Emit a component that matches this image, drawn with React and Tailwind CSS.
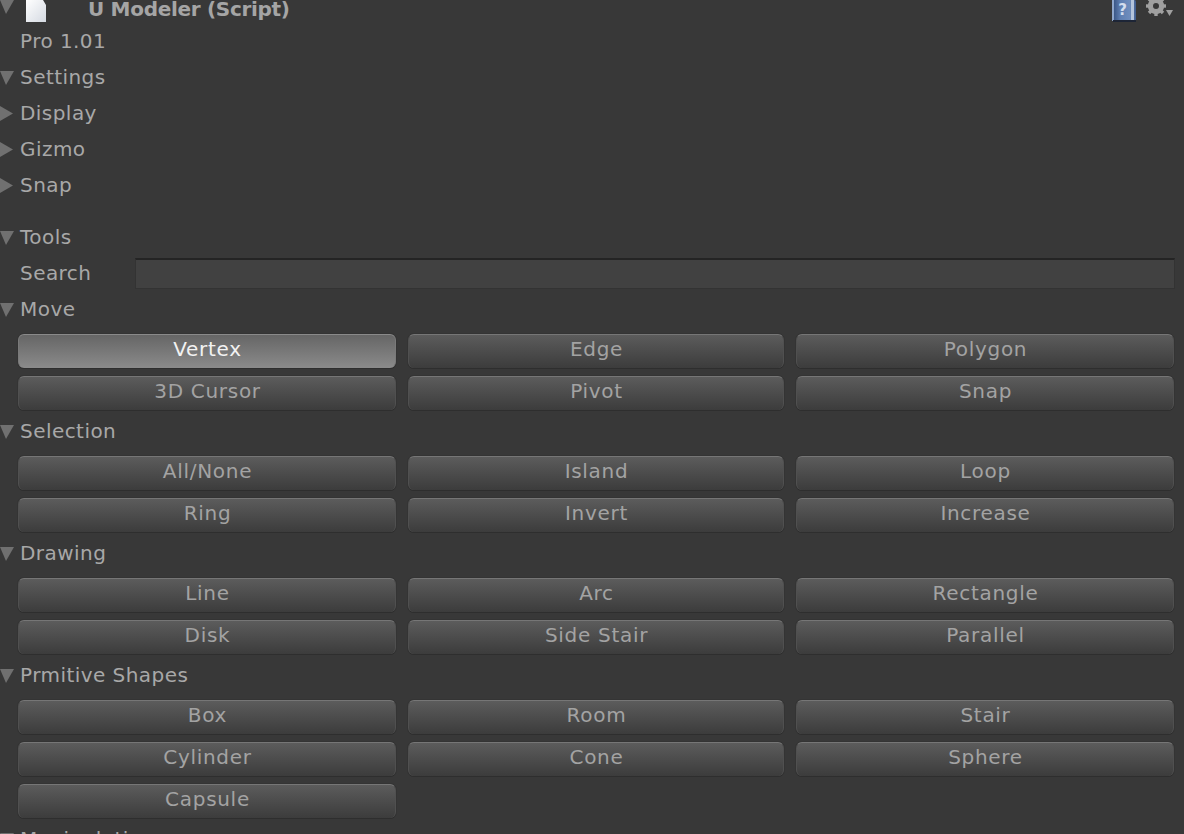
const font = { fontFamily: '"DejaVu Sans", sans-serif' };

function Tri({ open }) {
  return (
    <svg width="14" height="16" viewBox="0 0 14 16" className="absolute left-0 top-1/2 -translate-y-1/2">
      {open ? <polygon points="0,2 14,2 6,16" fill="#707070" /> : <polygon points="0,1 0,16 13,8.5" fill="#707070" />}
    </svg>
  );
}

function Row({ label, open, arrow = true }) {
  return (
    <div className="relative flex h-9 items-center pl-5 text-[20px] tracking-[0.45px] text-[#a8a8a8]">
      {arrow && <Tri open={open} />}
      {label}
    </div>
  );
}

function Btn({ label, active }) {
  return (
    <button
      className={
        "h-[34px] rounded-[6px] border-x border-t pb-[5px] pl-[1px] text-[20px] leading-[20px] tracking-[0.7px] shadow-[0_1px_0_#2e2e2e,0_0_0_1px_#343434] " +
        (active
          ? "border-x-[#7a7a7a] border-t-[#8a8a8a] bg-gradient-to-b from-[#666666] to-[#8b8b8b] text-[#f2f2f2]"
          : "border-x-[#505050] border-t-[#767676] bg-gradient-to-b from-[#5c5c5c] to-[#3c3c3c] text-[#a3a3a3]")
      }
    >
      {label}
    </button>
  );
}

function Section({ title, items }) {
  return (
    <div className="mb-[3px]">
      <Row label={title} open />
      <div className="grid grid-cols-[378px_376px_378px] gap-x-3 gap-y-2 pl-[18px] pt-[7px]">
        {items.map((it) => (
          <Btn key={it} label={it} active={it === "Vertex"} />
        ))}
      </div>
    </div>
  );
}

export default function App() {
  return (
    <div className="h-[834px] w-[1184px] overflow-hidden bg-[#383838]" style={font}>
      <div className="relative mb-[7px] flex h-4 items-center pl-[88px] pt-[2px] text-[20px] font-bold tracking-[-0.3px] text-[#a5a5a5]">
        <svg width="14" height="14" viewBox="0 0 14 14" className="absolute left-0 top-0">
          <polygon points="0,0 14,0 6,14" fill="#707070" />
        </svg>
        <svg width="21" height="22" viewBox="0 0 21 22" className="absolute left-[26px] top-0">
          <defs>
            <linearGradient id="doc" x1="0" y1="0" x2="1" y2="1">
              <stop offset="0" stopColor="#ffffff" />
              <stop offset="1" stopColor="#d5dae2" />
            </linearGradient>
          </defs>
          <polygon points="0,0 17,0 20,5 20,22 0,22" fill="url(#doc)" />
        </svg>
        <span className="leading-none">U Modeler (Script)</span>
        <svg width="26" height="23" viewBox="0 0 26 23" className="absolute left-[1111px] top-0">
          <defs>
            <linearGradient id="book" x1="0" y1="0" x2="1" y2="0">
              <stop offset="0" stopColor="#2f4a78" />
              <stop offset="0.35" stopColor="#5f7fb2" />
              <stop offset="0.75" stopColor="#6f8dbd" />
              <stop offset="1" stopColor="#3f5c8e" />
            </linearGradient>
          </defs>
          <rect x="1" y="0" width="24" height="21" rx="1.5" fill="url(#book)" />
          <rect x="1" y="0" width="2" height="21" fill="#8ea6cb" />
          <rect x="20" y="0" width="3" height="21" fill="#b4c4dc" />
          <rect x="2" y="20" width="23" height="2" fill="#1d2536" />
          <text x="11.5" y="15" fontSize="15" textAnchor="middle" fill="#d4deee" style={font}>?</text>
        </svg>
        <svg width="28" height="20" viewBox="0 0 28 20" className="absolute left-[1146px] top-0">
          <circle cx="10" cy="6" r="6" fill="none" stroke="#a0a0a0" strokeWidth="4.4" />
          <g stroke="#a0a0a0" strokeWidth="3.4">
            <line x1="10" y1="-3" x2="10" y2="16" />
            <line x1="0" y1="6" x2="20" y2="6" />
            <line x1="3" y1="-1" x2="17" y2="13" />
            <line x1="17" y1="-1" x2="3" y2="13" />
          </g>
          <circle cx="10" cy="6" r="3" fill="#383838" />
          <polygon points="20,10 27,10 23.5,16" fill="#a0a0a0" />
        </svg>
      </div>

      <Row label="Pro 1.01" arrow={false} />
      <Row label="Settings" open />
      <Row label="Display" />
      <Row label="Gizmo" />
      <Row label="Snap" />
      <div className="h-4" />
      <Row label="Tools" open />
      <div className="flex h-9 items-center">
        <div className="flex h-9 w-[135px] items-center pl-5 text-[20px] tracking-[0.45px] text-[#a8a8a8]">Search</div>
        <div className="h-[31px] w-[1040px] border border-t-2 border-[#333333] border-t-[#242424] bg-[#414141]" />
      </div>
      <Section title="Move" items={["Vertex", "Edge", "Polygon", "3D Cursor", "Pivot", "Snap"]} />
      <Section title="Selection" items={["All/None", "Island", "Loop", "Ring", "Invert", "Increase"]} />
      <Section title="Drawing" items={["Line", "Arc", "Rectangle", "Disk", "Side Stair", "Parallel"]} />
      <Section title="Prmitive Shapes" items={["Box", "Room", "Stair", "Cylinder", "Cone", "Sphere", "Capsule"]} />
      <Row label="Manipulation" open />
    </div>
  );
}
